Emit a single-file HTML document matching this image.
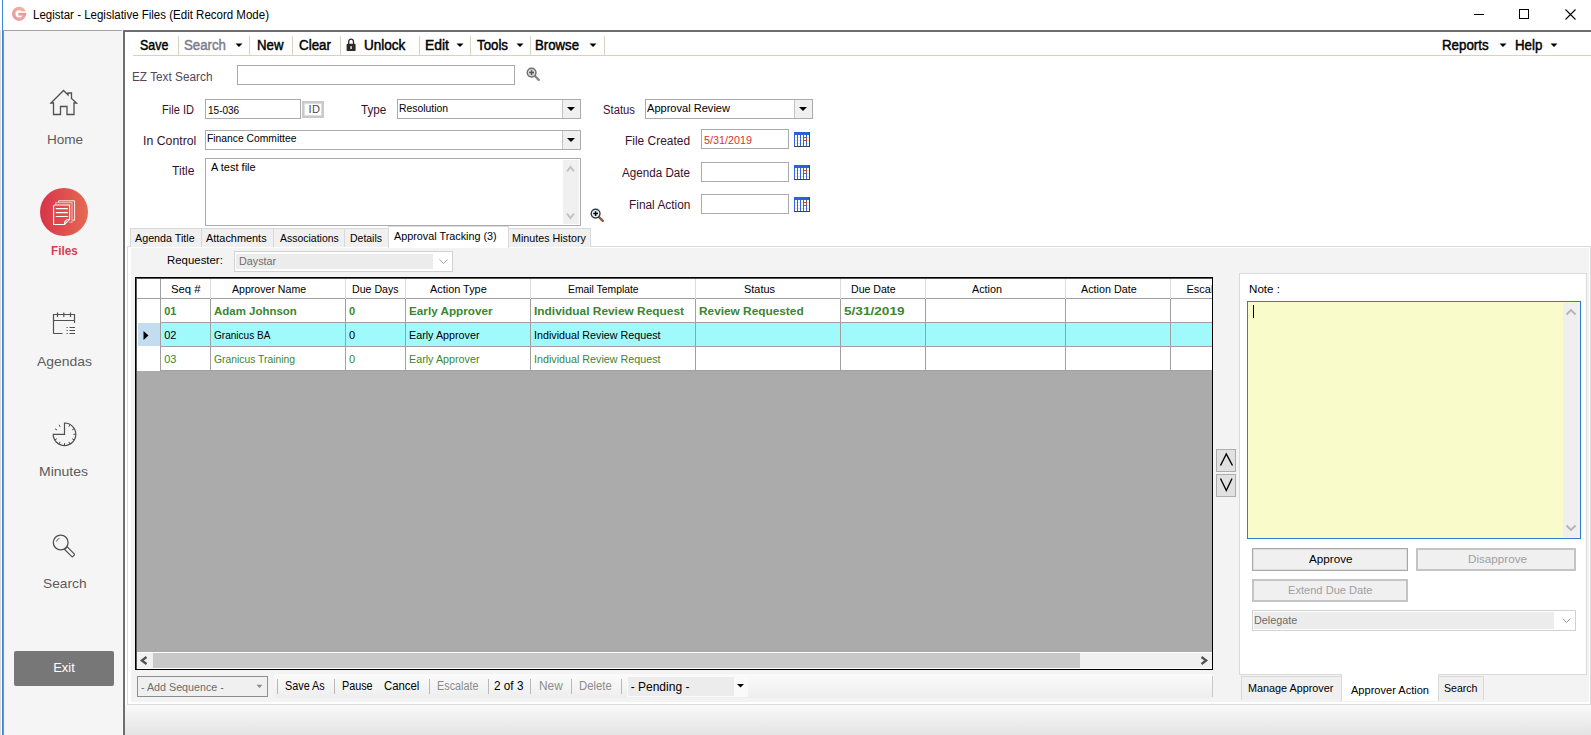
<!DOCTYPE html><html><head><meta charset="utf-8"><title>Legistar</title><style>*{margin:0;padding:0;box-sizing:border-box}
html,body{width:1591px;height:735px;overflow:hidden;background:#fff;font-family:"Liberation Sans",sans-serif}
.a{position:absolute}
.t{position:absolute;white-space:nowrap;font-family:"Liberation Sans",sans-serif}
</style></head><body>
<div class="a" style="left:0px;top:0px;width:1591px;height:735px;background:#fff"></div>
<div class="a" style="left:0px;top:30px;width:1px;height:705px;background:#dedede"></div>
<div class="a" style="left:2px;top:0px;width:1px;height:735px;background:#3f88d8"></div>
<svg class="a" style="left:11px;top:6px;" width="17" height="17" viewBox="0 0 17 17"><defs><linearGradient id="gg" x1="0" y1="1" x2="1" y2="0"><stop offset="0" stop-color="#e89a9c"/><stop offset="1" stop-color="#f2b49c"/></linearGradient></defs><circle cx="8.1" cy="7.8" r="5.4" fill="none" stroke="url(#gg)" stroke-width="3.5"/><rect x="10.5" y="5.3" width="6" height="1.6" fill="#fff"/><rect x="7.3" y="6.9" width="7.8" height="2.7" fill="#e99a9a"/></svg>
<div class="t" style="left:33.00px;top:9.00px;font-size:12px;line-height:12px;font-weight:400;color:#000;transform:scaleX(0.9589);transform-origin:0 0;">Legistar - Legislative Files (Edit Record Mode)</div>
<div class="a" style="left:1474px;top:14px;width:10px;height:1px;background:#000"></div>
<div class="a" style="left:1519px;top:9px;width:10px;height:10px;border:1px solid #000"></div>
<svg class="a" style="left:1564px;top:8px;" width="13" height="13" viewBox="0 0 13 13"><path d="M1.5 1.5L11.5 11.5M11.5 1.5L1.5 11.5" stroke="#000" stroke-width="1.1"/></svg>
<div class="a" style="left:3px;top:30px;width:119px;height:1px;background:#a5a5a5"></div>
<div class="a" style="left:3px;top:31px;width:1px;height:704px;background:#8c8c8c"></div>
<div class="a" style="left:4px;top:31px;width:118px;height:704px;background:#f5f5f5"></div>
<div class="a" style="left:122px;top:31px;width:1px;height:704px;background:#fafafa"></div>
<svg class="a" style="left:48px;top:88px;" width="32" height="30" viewBox="0 0 32 30"><path d="M3 15 L15.5 2.5 L20 7 L20 5 L23.5 5 L23.5 10.5 L28.5 15 L26 15 L26 26.5 L19 26.5 L19 18.5 L12.5 18.5 L12.5 26.5 L5.5 26.5 L5.5 15 Z" fill="none" stroke="#505050" stroke-width="1.3" stroke-linejoin="miter"/></svg>
<div class="t" style="left:46.70px;top:134.00px;font-size:12.5px;line-height:12.5px;font-weight:400;color:#5c5c5c;transform:scaleX(1.0846);transform-origin:0 0;">Home</div>
<svg class="a" style="left:40px;top:188px;" width="48" height="48" viewBox="0 0 48 48"><defs><linearGradient id="fg" x1="0" x2="1" y1="0" y2="0"><stop offset="0" stop-color="#d8344a"/><stop offset="1" stop-color="#e56a52"/></linearGradient></defs><circle cx="24" cy="24" r="24" fill="url(#fg)"/><path d="M18.6 14 V12.8 H34.6 V32.2 H32.5" fill="none" stroke="#fff" stroke-opacity="0.9" stroke-width="1"/><path d="M15.6 17 V15.5 Q15.6 14.6 16.6 14.6 H32 V34.2 H29.5" fill="none" stroke="#fff" stroke-opacity="0.55" stroke-width="1.1"/><path d="M13.6 18.3 Q13.6 17 15 17 H29.6 V31.3 L24.5 36.5 H13.6 Z" fill="none" stroke="#fff" stroke-width="1.1"/><path d="M24.5 36.5 Q24.2 31.5 29.6 31.3" fill="none" stroke="#fff" stroke-width="1.1"/><path d="M15.8 20.6 H27.8 M15.8 24.6 H27.8 M15.8 28.5 H27.8" stroke="#fff" stroke-width="1.1"/></svg>
<div class="t" style="left:51.20px;top:244.00px;font-size:13px;line-height:13px;font-weight:700;color:#d43d52;transform:scaleX(0.9008);transform-origin:0 0;">Files</div>
<svg class="a" style="left:50px;top:310px;" width="30" height="28" viewBox="0 0 30 28"><path d="M3.5 23.5 H12.5 M3.5 23.5 V4.5 H24.5 V13 M3.5 10.5 H24.5" fill="none" stroke="#505050" stroke-width="1.2"/><path d="M7.5 2.5 V7 M13.8 2.5 V7 M20.5 2.5 V7" stroke="#505050" stroke-width="1.2"/><path d="M16.5 17.5 h1.2 M16.5 20.5 h1.2 M16.5 23.5 h1.2 M19.5 17.5 H25 M19.5 20.5 H25 M19.5 23.5 H25" stroke="#505050" stroke-width="1.1"/></svg>
<div class="t" style="left:37.00px;top:355.00px;font-size:13px;line-height:13px;font-weight:400;color:#5c5c5c;transform:scaleX(1.0711);transform-origin:0 0;">Agendas</div>
<svg class="a" style="left:0px;top:0px;pointer-events:none" width="130" height="735" viewBox="0 0 130 735"><g><path d="M64.5 423 A11.3 11.3 0 1 1 53.2 434.3 H64.5 Z" fill="none" stroke="#505050" stroke-width="1.2"/><path d="M70.15 424.51 L68.90 426.68" stroke="#505050" stroke-width="1"/><path d="M74.29 428.65 L72.12 429.90" stroke="#505050" stroke-width="1"/><path d="M75.80 434.30 L73.30 434.30" stroke="#505050" stroke-width="1"/><path d="M74.29 439.95 L72.12 438.70" stroke="#505050" stroke-width="1"/><path d="M70.15 444.09 L68.90 441.92" stroke="#505050" stroke-width="1"/><path d="M64.50 445.60 L64.50 443.10" stroke="#505050" stroke-width="1"/><path d="M58.85 444.09 L60.10 441.92" stroke="#505050" stroke-width="1"/><path d="M54.71 439.95 L56.88 438.70" stroke="#505050" stroke-width="1"/><path d="M54.97 428.80 L57.05 430.00" stroke="#505050" stroke-width="1"/><path d="M59.00 424.77 L60.20 426.85" stroke="#505050" stroke-width="1"/></g></svg>
<div class="t" style="left:39.00px;top:465.00px;font-size:13px;line-height:13px;font-weight:400;color:#5c5c5c;transform:scaleX(1.0769);transform-origin:0 0;">Minutes</div>
<svg class="a" style="left:48px;top:530px;" width="30" height="30" viewBox="0 0 30 30"><circle cx="12.7" cy="12.5" r="7.4" fill="none" stroke="#505050" stroke-width="1.3"/><path d="M8.5 11.5 A4.5 4.5 0 0 1 11.5 8.3" fill="none" stroke="#505050" stroke-width="0.9"/><path d="M18 18 L19.2 16.8 L26.2 23.8 A1 1 0 0 1 26.2 25.2 L25 26.4 A1 1 0 0 1 23.6 26.4 L16.6 19.4 Z" fill="none" stroke="#505050" stroke-width="1.2"/></svg>
<div class="t" style="left:42.80px;top:577.00px;font-size:13px;line-height:13px;font-weight:400;color:#5c5c5c;transform:scaleX(1.0580);transform-origin:0 0;">Search</div>
<div class="a" style="left:14px;top:651px;width:100px;height:35px;background:#777;border-radius:2px"></div>
<div class="t" style="left:53.18px;top:661.00px;font-size:13px;line-height:13px;font-weight:400;color:#fff;">Exit</div>
<div class="a" style="left:123px;top:30px;width:1468px;height:2px;background:#6e6e6e"></div>
<div class="a" style="left:123px;top:30px;width:2px;height:705px;background:#6e6e6e"></div>
<div class="a" style="left:133px;top:55px;width:1458px;height:1px;background:#d8d2be"></div>
<div class="a" style="left:178px;top:36px;width:1px;height:19px;background:#d8d2be"></div>
<div class="a" style="left:249px;top:36px;width:1px;height:19px;background:#d8d2be"></div>
<div class="a" style="left:292px;top:36px;width:1px;height:19px;background:#d8d2be"></div>
<div class="a" style="left:340px;top:36px;width:1px;height:19px;background:#d8d2be"></div>
<div class="a" style="left:419px;top:36px;width:1px;height:19px;background:#d8d2be"></div>
<div class="a" style="left:470px;top:36px;width:1px;height:19px;background:#d8d2be"></div>
<div class="a" style="left:530px;top:36px;width:1px;height:19px;background:#d8d2be"></div>
<div class="a" style="left:604px;top:36px;width:1px;height:19px;background:#d8d2be"></div>
<div class="t" style="left:140.00px;top:38.00px;font-size:14px;line-height:14px;font-weight:400;color:#000;transform:scaleX(0.8866);transform-origin:0 0;-webkit-text-stroke:0.45px currentColor">Save</div>
<div class="t" style="left:183.50px;top:38.00px;font-size:14px;line-height:14px;font-weight:400;color:#7c7c8c;transform:scaleX(0.9464);transform-origin:0 0;-webkit-text-stroke:0.45px currentColor">Search</div>
<svg class="a" style="left:234.5px;top:43px;" width="8" height="5" viewBox="0 0 8 5"><path d="M0.5 0.5 H7.5 L4 4 Z" fill="#000"/></svg>
<div class="t" style="left:256.50px;top:38.00px;font-size:14px;line-height:14px;font-weight:400;color:#000;transform:scaleX(0.9441);transform-origin:0 0;-webkit-text-stroke:0.45px currentColor">New</div>
<div class="t" style="left:299.00px;top:38.00px;font-size:14px;line-height:14px;font-weight:400;color:#000;transform:scaleX(0.9564);transform-origin:0 0;-webkit-text-stroke:0.45px currentColor">Clear</div>
<svg class="a" style="left:345px;top:38px;" width="12" height="14" viewBox="0 0 12 14"><path d="M3.7 6 V4 A2.4 2.9 0 0 1 8.5 4 V6" fill="none" stroke="#2a2a2a" stroke-width="1.3"/><rect x="1.6" y="5.7" width="9" height="7.4" rx="1.2" fill="#2a2a2a"/><rect x="5.2" y="8" width="1.8" height="3" rx="0.6" fill="#ccc"/></svg>
<div class="t" style="left:363.60px;top:38.00px;font-size:14px;line-height:14px;font-weight:400;color:#000;transform:scaleX(0.9664);transform-origin:0 0;-webkit-text-stroke:0.45px currentColor">Unlock</div>
<div class="t" style="left:425.00px;top:38.00px;font-size:14px;line-height:14px;font-weight:400;color:#000;transform:scaleX(0.9938);transform-origin:0 0;-webkit-text-stroke:0.45px currentColor">Edit</div>
<svg class="a" style="left:456px;top:43px;" width="8" height="5" viewBox="0 0 8 5"><path d="M0.5 0.5 H7.5 L4 4 Z" fill="#000"/></svg>
<div class="t" style="left:477.00px;top:38.00px;font-size:14px;line-height:14px;font-weight:400;color:#000;transform:scaleX(0.9483);transform-origin:0 0;-webkit-text-stroke:0.45px currentColor">Tools</div>
<svg class="a" style="left:516px;top:43px;" width="8" height="5" viewBox="0 0 8 5"><path d="M0.5 0.5 H7.5 L4 4 Z" fill="#000"/></svg>
<div class="t" style="left:535.00px;top:38.00px;font-size:14px;line-height:14px;font-weight:400;color:#000;transform:scaleX(0.9424);transform-origin:0 0;-webkit-text-stroke:0.45px currentColor">Browse</div>
<svg class="a" style="left:589px;top:43px;" width="8" height="5" viewBox="0 0 8 5"><path d="M0.5 0.5 H7.5 L4 4 Z" fill="#000"/></svg>
<div class="t" style="left:1442.40px;top:38.00px;font-size:14px;line-height:14px;font-weight:400;color:#000;transform:scaleX(0.9510);transform-origin:0 0;-webkit-text-stroke:0.45px currentColor">Reports</div>
<svg class="a" style="left:1499.4px;top:43px;" width="8" height="5" viewBox="0 0 8 5"><path d="M0.5 0.5 H7.5 L4 4 Z" fill="#000"/></svg>
<div class="t" style="left:1514.70px;top:38.00px;font-size:14px;line-height:14px;font-weight:400;color:#000;transform:scaleX(0.9489);transform-origin:0 0;-webkit-text-stroke:0.45px currentColor">Help</div>
<svg class="a" style="left:1549.5px;top:43px;" width="8" height="5" viewBox="0 0 8 5"><path d="M0.5 0.5 H7.5 L4 4 Z" fill="#000"/></svg>
<div class="t" style="left:131.50px;top:71.00px;font-size:12.5px;line-height:12.5px;font-weight:400;color:#50485a;transform:scaleX(0.9443);transform-origin:0 0;">EZ Text Search</div>
<div class="a" style="left:237px;top:65px;width:278px;height:20px;background:#fff;border:1px solid #ababab"></div>
<svg class="a" style="left:526px;top:67px;" width="15" height="15" viewBox="0 0 15 15"><path d="M8.3 8.3 L12.8 12.8" stroke="#8a8a8a" stroke-width="2.4" stroke-linecap="round"/><circle cx="5.6" cy="5.6" r="4.4" fill="#d6d6d6" stroke="#6e6e6e" stroke-width="1.4"/><path d="M3.2 5.6 H8 M5.6 3.2 V8" stroke="#555" stroke-width="1.5"/></svg>
<div class="t" style="left:162.00px;top:104.00px;font-size:12.5px;line-height:12.5px;font-weight:400;color:#3a1030;transform:scaleX(0.8858);transform-origin:0 0;">File ID</div>
<div class="a" style="left:205px;top:99px;width:96px;height:20px;background:#fff;border:1px solid #ababab"></div>
<div class="t" style="left:208.30px;top:105.00px;font-size:11px;line-height:11px;font-weight:400;color:#000;transform:scaleX(0.9106);transform-origin:0 0;">15-036</div>
<div class="a" style="left:302px;top:101px;width:22px;height:17px;background:#fff;border:2px solid #c9c9c9"></div>
<div class="a" style="left:304px;top:103px;width:18px;height:13px;border:1px solid #dedede"></div>
<div class="t" style="left:308.40px;top:104.00px;font-size:11px;line-height:11px;font-weight:400;color:#4a4a4a;letter-spacing:0.6px">ID</div>
<div class="t" style="left:360.80px;top:104.00px;font-size:12.5px;line-height:12.5px;font-weight:400;color:#3a1030;transform:scaleX(0.9364);transform-origin:0 0;">Type</div>
<div class="a" style="left:397px;top:99px;width:184px;height:20px;background:#fff;border:1px solid #ababab"></div>
<div class="a" style="left:562px;top:100px;width:18px;height:18px;background:#f0f0f0;border-left:1px solid #c4c4c4"></div>
<svg class="a" style="left:566.0px;top:106.0px;" width="10" height="6" viewBox="0 0 10 6"><path d="M1 1 H9 L5 5 Z" fill="#000"/></svg>
<div class="t" style="left:399.40px;top:103.00px;font-size:11px;line-height:11px;font-weight:400;color:#000;transform:scaleX(0.9447);transform-origin:0 0;">Resolution</div>
<div class="t" style="left:603.00px;top:104.00px;font-size:12.5px;line-height:12.5px;font-weight:400;color:#3a1030;transform:scaleX(0.9030);transform-origin:0 0;">Status</div>
<div class="a" style="left:645px;top:99px;width:168px;height:20px;background:#fff;border:1px solid #ababab"></div>
<div class="a" style="left:794px;top:100px;width:18px;height:18px;background:#f0f0f0;border-left:1px solid #c4c4c4"></div>
<svg class="a" style="left:798.0px;top:106.0px;" width="10" height="6" viewBox="0 0 10 6"><path d="M1 1 H9 L5 5 Z" fill="#000"/></svg>
<div class="t" style="left:647.00px;top:103.00px;font-size:11px;line-height:11px;font-weight:400;color:#000;transform:scaleX(1.0054);transform-origin:0 0;">Approval Review</div>
<div class="t" style="left:143.40px;top:135.00px;font-size:12.5px;line-height:12.5px;font-weight:400;color:#3a1030;transform:scaleX(0.9836);transform-origin:0 0;">In Control</div>
<div class="a" style="left:205px;top:130px;width:376px;height:20px;background:#fff;border:1px solid #ababab"></div>
<div class="a" style="left:562px;top:131px;width:18px;height:18px;background:#f0f0f0;border-left:1px solid #c4c4c4"></div>
<svg class="a" style="left:566.0px;top:137.0px;" width="10" height="6" viewBox="0 0 10 6"><path d="M1 1 H9 L5 5 Z" fill="#000"/></svg>
<div class="t" style="left:207.30px;top:133.00px;font-size:11px;line-height:11px;font-weight:400;color:#000;transform:scaleX(0.9374);transform-origin:0 0;">Finance Committee</div>
<div class="t" style="left:625.00px;top:135.00px;font-size:12.5px;line-height:12.5px;font-weight:400;color:#3a1030;transform:scaleX(0.9550);transform-origin:0 0;">File Created</div>
<div class="a" style="left:701px;top:129px;width:88px;height:20px;background:#fff;border:1px solid #ababab"></div>
<div class="t" style="left:703.80px;top:135.00px;font-size:11px;line-height:11px;font-weight:400;color:#e0302a;transform:scaleX(0.9806);transform-origin:0 0;">5/31/2019</div>
<svg class="a" style="left:794px;top:132px;" width="16" height="15" viewBox="0 0 16 15"><g shape-rendering="crispEdges"><rect x="1" y="3" width="14" height="11" fill="#fff"/><rect x="1" y="5" width="14" height="1" fill="#f2e2d6"/><rect x="1" y="8" width="14" height="1" fill="#f2e2d6"/><rect x="1" y="11" width="14" height="1" fill="#f2e2d6"/><rect x="0" y="0" width="15" height="3" fill="#2d62d2"/><rect x="0" y="3" width="1" height="11" fill="#2d66dc"/><rect x="3" y="3" width="1" height="11" fill="#2d66dc"/><rect x="6" y="3" width="1" height="11" fill="#2d66dc"/><rect x="9" y="3" width="1" height="11" fill="#2d66dc"/><rect x="12" y="3" width="1" height="11" fill="#2d66dc"/><rect x="15" y="0" width="1" height="15" fill="#444"/><rect x="0" y="14" width="16" height="1" fill="#444"/><rect x="9" y="5" width="4" height="4" fill="#b04a38"/><rect x="10" y="6" width="2" height="2" fill="#fff"/></g></svg>
<div class="t" style="left:622.00px;top:167.00px;font-size:12.5px;line-height:12.5px;font-weight:400;color:#3a1030;transform:scaleX(0.9315);transform-origin:0 0;">Agenda Date</div>
<div class="a" style="left:701px;top:162px;width:88px;height:20px;background:#fff;border:1px solid #ababab"></div>
<svg class="a" style="left:794px;top:165px;" width="16" height="15" viewBox="0 0 16 15"><g shape-rendering="crispEdges"><rect x="1" y="3" width="14" height="11" fill="#fff"/><rect x="1" y="5" width="14" height="1" fill="#f2e2d6"/><rect x="1" y="8" width="14" height="1" fill="#f2e2d6"/><rect x="1" y="11" width="14" height="1" fill="#f2e2d6"/><rect x="0" y="0" width="15" height="3" fill="#2d62d2"/><rect x="0" y="3" width="1" height="11" fill="#2d66dc"/><rect x="3" y="3" width="1" height="11" fill="#2d66dc"/><rect x="6" y="3" width="1" height="11" fill="#2d66dc"/><rect x="9" y="3" width="1" height="11" fill="#2d66dc"/><rect x="12" y="3" width="1" height="11" fill="#2d66dc"/><rect x="15" y="0" width="1" height="15" fill="#444"/><rect x="0" y="14" width="16" height="1" fill="#444"/><rect x="9" y="5" width="4" height="4" fill="#b04a38"/><rect x="10" y="6" width="2" height="2" fill="#fff"/></g></svg>
<div class="t" style="left:628.60px;top:199.00px;font-size:12.5px;line-height:12.5px;font-weight:400;color:#3a1030;transform:scaleX(0.9501);transform-origin:0 0;">Final Action</div>
<div class="a" style="left:701px;top:194px;width:88px;height:20px;background:#fff;border:1px solid #ababab"></div>
<svg class="a" style="left:794px;top:197px;" width="16" height="15" viewBox="0 0 16 15"><g shape-rendering="crispEdges"><rect x="1" y="3" width="14" height="11" fill="#fff"/><rect x="1" y="5" width="14" height="1" fill="#f2e2d6"/><rect x="1" y="8" width="14" height="1" fill="#f2e2d6"/><rect x="1" y="11" width="14" height="1" fill="#f2e2d6"/><rect x="0" y="0" width="15" height="3" fill="#2d62d2"/><rect x="0" y="3" width="1" height="11" fill="#2d66dc"/><rect x="3" y="3" width="1" height="11" fill="#2d66dc"/><rect x="6" y="3" width="1" height="11" fill="#2d66dc"/><rect x="9" y="3" width="1" height="11" fill="#2d66dc"/><rect x="12" y="3" width="1" height="11" fill="#2d66dc"/><rect x="15" y="0" width="1" height="15" fill="#444"/><rect x="0" y="14" width="16" height="1" fill="#444"/><rect x="9" y="5" width="4" height="4" fill="#b04a38"/><rect x="10" y="6" width="2" height="2" fill="#fff"/></g></svg>
<div class="t" style="left:172.00px;top:165.00px;font-size:12.5px;line-height:12.5px;font-weight:400;color:#3a1030;transform:scaleX(0.9730);transform-origin:0 0;">Title</div>
<div class="a" style="left:205px;top:158px;width:376px;height:68px;background:#fff;border:1px solid #ababab"></div>
<div class="a" style="left:563px;top:160px;width:16px;height:64px;background:#f0f0f0"></div>
<svg class="a" style="left:563px;top:160px;" width="16" height="64" viewBox="0 0 16 64"><path d="M4 11.5 L7.5 7 L11 11.5 M4 53.5 L7.5 58 L11 53.5" fill="none" stroke="#c2c2c2" stroke-width="2"/></svg>
<div class="t" style="left:211.00px;top:162.00px;font-size:11px;line-height:11px;font-weight:400;color:#000;">A test file</div>
<svg class="a" style="left:590px;top:208px;" width="15" height="15" viewBox="0 0 15 15"><path d="M8.3 8.3 L12.8 12.8" stroke="#8a5a3a" stroke-width="2.4" stroke-linecap="round"/><circle cx="5.6" cy="5.6" r="4.4" fill="#eaf4f8" stroke="#2d3a40" stroke-width="1.4"/><path d="M3.2 5.6 H8 M5.6 3.2 V8" stroke="#000" stroke-width="1.5"/></svg>
<div class="a" style="left:127px;top:246px;width:1464px;height:459px;background:#fff;border:1px solid #dadada"></div>
<div class="a" style="left:131px;top:248px;width:1458px;height:454px;background:#f3f3f3"></div>
<div class="a" style="left:130px;top:228px;width:72px;height:19px;background:#f0f0f0;border:1px solid #d9d9d9;border-bottom:none"></div>
<div class="t" style="left:134.80px;top:233.00px;font-size:11.5px;line-height:11.5px;font-weight:400;color:#000;transform:scaleX(0.9337);transform-origin:0 0;">Agenda Title</div>
<div class="a" style="left:201px;top:228px;width:73px;height:19px;background:#f0f0f0;border:1px solid #d9d9d9;border-bottom:none"></div>
<div class="t" style="left:206.40px;top:233.00px;font-size:11.5px;line-height:11.5px;font-weight:400;color:#000;transform:scaleX(0.9478);transform-origin:0 0;">Attachments</div>
<div class="a" style="left:273px;top:228px;width:72px;height:19px;background:#f0f0f0;border:1px solid #d9d9d9;border-bottom:none"></div>
<div class="t" style="left:279.60px;top:233.00px;font-size:11.5px;line-height:11.5px;font-weight:400;color:#000;transform:scaleX(0.9106);transform-origin:0 0;">Associations</div>
<div class="a" style="left:344px;top:228px;width:45px;height:19px;background:#f0f0f0;border:1px solid #d9d9d9;border-bottom:none"></div>
<div class="t" style="left:350.40px;top:233.00px;font-size:11.5px;line-height:11.5px;font-weight:400;color:#000;transform:scaleX(0.9108);transform-origin:0 0;">Details</div>
<div class="a" style="left:508px;top:228px;width:83px;height:19px;background:#f0f0f0;border:1px solid #d9d9d9;border-bottom:none"></div>
<div class="t" style="left:512.20px;top:233.00px;font-size:11.5px;line-height:11.5px;font-weight:400;color:#000;transform:scaleX(0.9314);transform-origin:0 0;">Minutes History</div>
<div class="a" style="left:388px;top:226px;width:121px;height:22px;background:#fff;border:1px solid #d9d9d9;border-bottom:none"></div>
<div class="t" style="left:394.40px;top:231.00px;font-size:11.5px;line-height:11.5px;font-weight:400;color:#000;transform:scaleX(0.9396);transform-origin:0 0;">Approval Tracking (3)</div>
<div class="t" style="left:167.00px;top:255.00px;font-size:11.5px;line-height:11.5px;font-weight:400;color:#000;transform:scaleX(0.9923);transform-origin:0 0;">Requester:</div>
<div class="a" style="left:234px;top:251px;width:219px;height:21px;background:#fff;border:1px solid #d2d2d2"></div>
<div class="a" style="left:236px;top:254px;width:197px;height:15px;background:#ececec"></div>
<div class="t" style="left:239.40px;top:256.00px;font-size:11px;line-height:11px;font-weight:400;color:#6d6d6d;transform:scaleX(0.9790);transform-origin:0 0;">Daystar</div>
<svg class="a" style="left:438px;top:258px;" width="12" height="8" viewBox="0 0 12 8"><path d="M1.5 1.5 L5.5 5.5 L9.5 1.5" fill="none" stroke="#a0a0a0" stroke-width="1"/></svg>
<div class="a" style="left:135px;top:277px;width:1078px;height:393px;background:#ababab;border:1px solid #000"></div>
<div class="a" style="left:136px;top:278px;width:1076px;height:1px;background:#555"></div>
<div class="a" style="left:136px;top:278px;width:1px;height:391px;background:#555"></div>
<div class="a" style="left:137px;top:279px;width:1075px;height:20px;background:#fff"></div>
<div class="a" style="left:137px;top:298px;width:1075px;height:1px;background:#a0a0a0"></div>
<div class="a" style="left:137px;top:299px;width:1075px;height:72px;background:#fff"></div>
<div class="a" style="left:161px;top:323px;width:1051px;height:23px;background:#a0fafc"></div>
<div class="a" style="left:138px;top:323px;width:22px;height:23px;background:#c3dcf0"></div>
<div class="a" style="left:160px;top:322px;width:1052px;height:1px;background:#a0a0a0"></div>
<div class="a" style="left:160px;top:346px;width:1052px;height:1px;background:#a0a0a0"></div>
<div class="a" style="left:160px;top:370px;width:1052px;height:1px;background:#a0a0a0"></div>
<div class="a" style="left:160px;top:279px;width:1px;height:20px;background:#dcdcdc"></div>
<div class="a" style="left:160px;top:299px;width:1px;height:72px;background:#a0a0a0"></div>
<div class="a" style="left:210px;top:279px;width:1px;height:20px;background:#dcdcdc"></div>
<div class="a" style="left:210px;top:299px;width:1px;height:72px;background:#a0a0a0"></div>
<div class="a" style="left:345px;top:279px;width:1px;height:20px;background:#dcdcdc"></div>
<div class="a" style="left:345px;top:299px;width:1px;height:72px;background:#a0a0a0"></div>
<div class="a" style="left:405px;top:279px;width:1px;height:20px;background:#dcdcdc"></div>
<div class="a" style="left:405px;top:299px;width:1px;height:72px;background:#a0a0a0"></div>
<div class="a" style="left:530px;top:279px;width:1px;height:20px;background:#dcdcdc"></div>
<div class="a" style="left:530px;top:299px;width:1px;height:72px;background:#a0a0a0"></div>
<div class="a" style="left:695px;top:279px;width:1px;height:20px;background:#dcdcdc"></div>
<div class="a" style="left:695px;top:299px;width:1px;height:72px;background:#a0a0a0"></div>
<div class="a" style="left:840px;top:279px;width:1px;height:20px;background:#dcdcdc"></div>
<div class="a" style="left:840px;top:299px;width:1px;height:72px;background:#a0a0a0"></div>
<div class="a" style="left:925px;top:279px;width:1px;height:20px;background:#dcdcdc"></div>
<div class="a" style="left:925px;top:299px;width:1px;height:72px;background:#a0a0a0"></div>
<div class="a" style="left:1065px;top:279px;width:1px;height:20px;background:#dcdcdc"></div>
<div class="a" style="left:1065px;top:299px;width:1px;height:72px;background:#a0a0a0"></div>
<div class="a" style="left:1170px;top:279px;width:1px;height:20px;background:#dcdcdc"></div>
<div class="a" style="left:1170px;top:299px;width:1px;height:72px;background:#a0a0a0"></div>
<div class="a" style="left:160px;top:279px;width:1px;height:92px;background:#a0a0a0"></div>
<svg class="a" style="left:142px;top:330px;" width="8" height="11" viewBox="0 0 8 11"><path d="M1.5 1 L6.5 5.5 L1.5 10 Z" fill="#000"/></svg>
<div class="t" style="left:171.30px;top:284.00px;font-size:11px;line-height:11px;font-weight:400;color:#000;transform:scaleX(1.0290);transform-origin:0 0;">Seq #</div>
<div class="t" style="left:231.60px;top:284.00px;font-size:11px;line-height:11px;font-weight:400;color:#000;transform:scaleX(0.9617);transform-origin:0 0;">Approver Name</div>
<div class="t" style="left:352.00px;top:284.00px;font-size:11px;line-height:11px;font-weight:400;color:#000;transform:scaleX(0.9650);transform-origin:0 0;">Due Days</div>
<div class="t" style="left:430.40px;top:284.00px;font-size:11px;line-height:11px;font-weight:400;color:#000;transform:scaleX(0.9903);transform-origin:0 0;">Action Type</div>
<div class="t" style="left:568.40px;top:284.00px;font-size:11px;line-height:11px;font-weight:400;color:#000;transform:scaleX(0.9411);transform-origin:0 0;">Email Template</div>
<div class="t" style="left:743.50px;top:284.00px;font-size:11px;line-height:11px;font-weight:400;color:#000;transform:scaleX(0.9941);transform-origin:0 0;">Status</div>
<div class="t" style="left:851.30px;top:284.00px;font-size:11px;line-height:11px;font-weight:400;color:#000;transform:scaleX(0.9618);transform-origin:0 0;">Due Date</div>
<div class="t" style="left:971.70px;top:284.00px;font-size:11px;line-height:11px;font-weight:400;color:#000;transform:scaleX(0.9778);transform-origin:0 0;">Action</div>
<div class="t" style="left:1080.80px;top:284.00px;font-size:11px;line-height:11px;font-weight:400;color:#000;transform:scaleX(0.9794);transform-origin:0 0;">Action Date</div>
<div class="a" style="left:1172px;top:279px;width:40px;height:20px;overflow:hidden">
<div class="t" style="left:14.50px;top:5.00px;font-size:11px;line-height:11px;font-weight:400;color:#000;">Escalation</div>
</div>
<div class="t" style="left:164.20px;top:306.00px;font-size:11px;line-height:11px;font-weight:700;color:#3b8630;">01</div>
<div class="t" style="left:213.90px;top:306.00px;font-size:11px;line-height:11px;font-weight:700;color:#3b8630;transform:scaleX(1.0418);transform-origin:0 0;">Adam Johnson</div>
<div class="t" style="left:349.00px;top:306.00px;font-size:11px;line-height:11px;font-weight:700;color:#3b8630;">0</div>
<div class="t" style="left:409.40px;top:306.00px;font-size:11px;line-height:11px;font-weight:700;color:#3b8630;transform:scaleX(1.0646);transform-origin:0 0;">Early Approver</div>
<div class="t" style="left:534.10px;top:306.00px;font-size:11px;line-height:11px;font-weight:700;color:#3b8630;transform:scaleX(1.0810);transform-origin:0 0;">Individual Review Request</div>
<div class="t" style="left:698.80px;top:306.00px;font-size:11px;line-height:11px;font-weight:700;color:#3b8630;transform:scaleX(1.0763);transform-origin:0 0;">Review Requested</div>
<div class="t" style="left:844.20px;top:306.00px;font-size:11px;line-height:11px;font-weight:700;color:#3b8630;transform:scaleX(1.2380);transform-origin:0 0;">5/31/2019</div>
<div class="t" style="left:164.20px;top:330.00px;font-size:11px;line-height:11px;font-weight:400;color:#000;">02</div>
<div class="t" style="left:213.90px;top:330.00px;font-size:11px;line-height:11px;font-weight:400;color:#000;transform:scaleX(0.9131);transform-origin:0 0;">Granicus BA</div>
<div class="t" style="left:349.00px;top:330.00px;font-size:11px;line-height:11px;font-weight:400;color:#000;">0</div>
<div class="t" style="left:409.40px;top:330.00px;font-size:11px;line-height:11px;font-weight:400;color:#000;transform:scaleX(0.9770);transform-origin:0 0;">Early Approver</div>
<div class="t" style="left:534.10px;top:330.00px;font-size:11px;line-height:11px;font-weight:400;color:#000;transform:scaleX(0.9758);transform-origin:0 0;">Individual Review Request</div>
<div class="t" style="left:164.20px;top:354.00px;font-size:11px;line-height:11px;font-weight:400;color:#3b8630;">03</div>
<div class="t" style="left:213.90px;top:354.00px;font-size:11px;line-height:11px;font-weight:400;color:#3b8630;transform:scaleX(0.9398);transform-origin:0 0;">Granicus Training</div>
<div class="t" style="left:349.00px;top:354.00px;font-size:11px;line-height:11px;font-weight:400;color:#3b8630;">0</div>
<div class="t" style="left:409.40px;top:354.00px;font-size:11px;line-height:11px;font-weight:400;color:#3b8630;transform:scaleX(0.9770);transform-origin:0 0;">Early Approver</div>
<div class="t" style="left:534.10px;top:354.00px;font-size:11px;line-height:11px;font-weight:400;color:#3b8630;transform:scaleX(0.9758);transform-origin:0 0;">Individual Review Request</div>
<div class="a" style="left:137px;top:652px;width:1075px;height:17px;background:#f0f0f0;border-top:1px solid #fff;border-bottom:1px solid #fff"></div>
<div class="a" style="left:153px;top:653px;width:927px;height:15px;background:#c8c8c8"></div>
<svg class="a" style="left:139px;top:655px;" width="10" height="11" viewBox="0 0 10 11"><path d="M7.5 2 L2.8 5.5 L7.5 9" fill="none" stroke="#505050" stroke-width="2.2"/></svg>
<svg class="a" style="left:1199px;top:655px;" width="10" height="11" viewBox="0 0 10 11"><path d="M2.5 2 L7.2 5.5 L2.5 9" fill="none" stroke="#505050" stroke-width="2.2"/></svg>
<div class="a" style="left:1216px;top:449px;width:20px;height:23px;background:#e1e1e1;border:1px solid #adadad"></div>
<svg class="a" style="left:1216px;top:449px;" width="20" height="23" viewBox="0 0 20 23"><path d="M4.5 16.5 L10.3 5 L16.5 16.5" fill="none" stroke="#000" stroke-width="1.4"/></svg>
<div class="a" style="left:1216px;top:474px;width:20px;height:23px;background:#e1e1e1;border:1px solid #adadad"></div>
<svg class="a" style="left:1216px;top:474px;" width="20" height="23" viewBox="0 0 20 23"><path d="M4.5 4.5 L10.3 16.5 L16 4.5" fill="none" stroke="#000" stroke-width="1.4"/></svg>
<div class="a" style="left:1239px;top:273px;width:348px;height:402px;background:#fff;border:1px solid #dadada"></div>
<div class="t" style="left:1249.00px;top:284.00px;font-size:11.5px;line-height:11.5px;font-weight:400;color:#000;transform:scaleX(1.0096);transform-origin:0 0;">Note :</div>
<div class="a" style="left:1247px;top:301px;width:334px;height:238px;background:#f9fbcb;border:1px solid #2f7ad4"></div>
<div class="a" style="left:1563px;top:303px;width:17px;height:234px;background:#efefef"></div>
<svg class="a" style="left:1564px;top:307px;" width="14" height="10" viewBox="0 0 14 10"><path d="M2.5 7.5 L7 3 L11.5 7.5" fill="none" stroke="#b3b3b3" stroke-width="1.8"/></svg>
<svg class="a" style="left:1564px;top:523px;" width="14" height="10" viewBox="0 0 14 10"><path d="M2.5 2.5 L7 7 L11.5 2.5" fill="none" stroke="#b3b3b3" stroke-width="1.8"/></svg>
<div class="a" style="left:1253px;top:305px;width:1px;height:13px;background:#000"></div>
<div class="a" style="left:1252px;top:548px;width:156px;height:23px;background:#f0f0f0;border:1px solid #a8a8a8"></div>
<div class="a" style="left:1253px;top:549px;width:154px;height:21px;border:1px solid #dedede"></div>
<div class="t" style="left:1308.50px;top:554.00px;font-size:11.5px;line-height:11.5px;font-weight:400;color:#000;transform:scaleX(1.0155);transform-origin:0 0;">Approve</div>
<div class="a" style="left:1416px;top:548px;width:160px;height:23px;background:#f0f0f0;border:2px solid #c4c4c4"></div>
<div class="t" style="left:1467.50px;top:554.00px;font-size:11.5px;line-height:11.5px;font-weight:400;color:#a0a0a0;transform:scaleX(1.0139);transform-origin:0 0;">Disapprove</div>
<div class="a" style="left:1252px;top:579px;width:156px;height:23px;background:#f0f0f0;border:2px solid #c4c4c4"></div>
<div class="t" style="left:1288.00px;top:585.00px;font-size:11.5px;line-height:11.5px;font-weight:400;color:#a0a0a0;transform:scaleX(0.9649);transform-origin:0 0;">Extend Due Date</div>
<div class="a" style="left:1252px;top:610px;width:324px;height:21px;background:#fff;border:1px solid #d2d2d2"></div>
<div class="a" style="left:1254px;top:612px;width:300px;height:17px;background:#ececec"></div>
<div class="t" style="left:1254.20px;top:615.00px;font-size:11px;line-height:11px;font-weight:400;color:#6d6d6d;transform:scaleX(0.9829);transform-origin:0 0;">Delegate</div>
<svg class="a" style="left:1561px;top:617px;" width="12" height="8" viewBox="0 0 12 8"><path d="M1.5 1.5 L5.5 5.5 L9.5 1.5" fill="none" stroke="#a0a0a0" stroke-width="1"/></svg>
<div class="a" style="left:1241px;top:676px;width:101px;height:24px;background:#f0f0f0;border:1px solid #d9d9d9;border-bottom:none"></div>
<div class="t" style="left:1248.20px;top:683.00px;font-size:11.5px;line-height:11.5px;font-weight:400;color:#000;transform:scaleX(0.9395);transform-origin:0 0;">Manage Approver</div>
<div class="a" style="left:1438px;top:676px;width:46px;height:24px;background:#f0f0f0;border:1px solid #d9d9d9;border-bottom:none"></div>
<div class="t" style="left:1444.00px;top:683.00px;font-size:11.5px;line-height:11.5px;font-weight:400;color:#000;transform:scaleX(0.9189);transform-origin:0 0;">Search</div>
<div class="a" style="left:1341px;top:674px;width:98px;height:27px;background:#fff;border-left:1px solid #d9d9d9;border-right:1px solid #d9d9d9"></div>
<div class="t" style="left:1350.50px;top:685.00px;font-size:11.5px;line-height:11.5px;font-weight:400;color:#000;transform:scaleX(0.9607);transform-origin:0 0;">Approver Action</div>
<div class="a" style="left:274px;top:674px;width:939px;height:24px;background:linear-gradient(#fbfbfb,#eeeeee);border-radius:3px"></div>
<div class="a" style="left:1212px;top:676px;width:1px;height:21px;background:#c8c8c8"></div>
<div class="a" style="left:137px;top:676px;width:131px;height:21px;background:#f0f0f0;border:1px solid #8e8e8e"></div>
<div class="t" style="left:141.10px;top:682.00px;font-size:11px;line-height:11px;font-weight:400;color:#6d6d6d;transform:scaleX(0.9738);transform-origin:0 0;">- Add Sequence -</div>
<svg class="a" style="left:256px;top:684px;" width="8" height="5" viewBox="0 0 8 5"><path d="M0.5 0.8 H6.5 L3.5 4 Z" fill="#8c8c8c"/></svg>
<div class="a" style="left:277px;top:679px;width:1px;height:15px;background:#b8b8b8"></div>
<div class="a" style="left:334px;top:679px;width:1px;height:15px;background:#b8b8b8"></div>
<div class="a" style="left:429px;top:679px;width:1px;height:15px;background:#b8b8b8"></div>
<div class="a" style="left:488px;top:679px;width:1px;height:15px;background:#b8b8b8"></div>
<div class="a" style="left:530px;top:679px;width:1px;height:15px;background:#b8b8b8"></div>
<div class="a" style="left:571px;top:679px;width:1px;height:15px;background:#b8b8b8"></div>
<div class="a" style="left:621px;top:679px;width:1px;height:15px;background:#b8b8b8"></div>
<div class="t" style="left:285.20px;top:680.00px;font-size:12px;line-height:12px;font-weight:400;color:#000;transform:scaleX(0.9015);transform-origin:0 0;">Save As</div>
<div class="t" style="left:342.30px;top:680.00px;font-size:12px;line-height:12px;font-weight:400;color:#000;transform:scaleX(0.8995);transform-origin:0 0;">Pause</div>
<div class="t" style="left:384.20px;top:680.00px;font-size:12px;line-height:12px;font-weight:400;color:#000;transform:scaleX(0.9470);transform-origin:0 0;">Cancel</div>
<div class="t" style="left:437.30px;top:680.00px;font-size:12px;line-height:12px;font-weight:400;color:#8c8c8c;transform:scaleX(0.9018);transform-origin:0 0;">Escalate</div>
<div class="t" style="left:493.80px;top:680.00px;font-size:12px;line-height:12px;font-weight:400;color:#000;transform:scaleX(0.9800);transform-origin:0 0;">2 of 3</div>
<div class="t" style="left:538.50px;top:680.00px;font-size:12px;line-height:12px;font-weight:400;color:#8c8c8c;transform:scaleX(0.9892);transform-origin:0 0;">New</div>
<div class="t" style="left:579.20px;top:680.00px;font-size:12px;line-height:12px;font-weight:400;color:#8c8c8c;transform:scaleX(0.9458);transform-origin:0 0;">Delete</div>
<div class="a" style="left:627px;top:676px;width:121px;height:21px;background:#fafafa"></div>
<div class="a" style="left:628px;top:677px;width:106px;height:19px;background:#ececec"></div>
<div class="t" style="left:630.70px;top:681.00px;font-size:12px;line-height:12px;font-weight:400;color:#000;">- Pending -</div>
<svg class="a" style="left:736px;top:683px;" width="9" height="6" viewBox="0 0 9 6"><path d="M1 1 H8 L4.5 4.5 Z" fill="#000"/></svg>
<div class="a" style="left:125px;top:705px;width:1466px;height:30px;background:linear-gradient(#f9f9f9,#e4e4e4)"></div>
</body></html>
